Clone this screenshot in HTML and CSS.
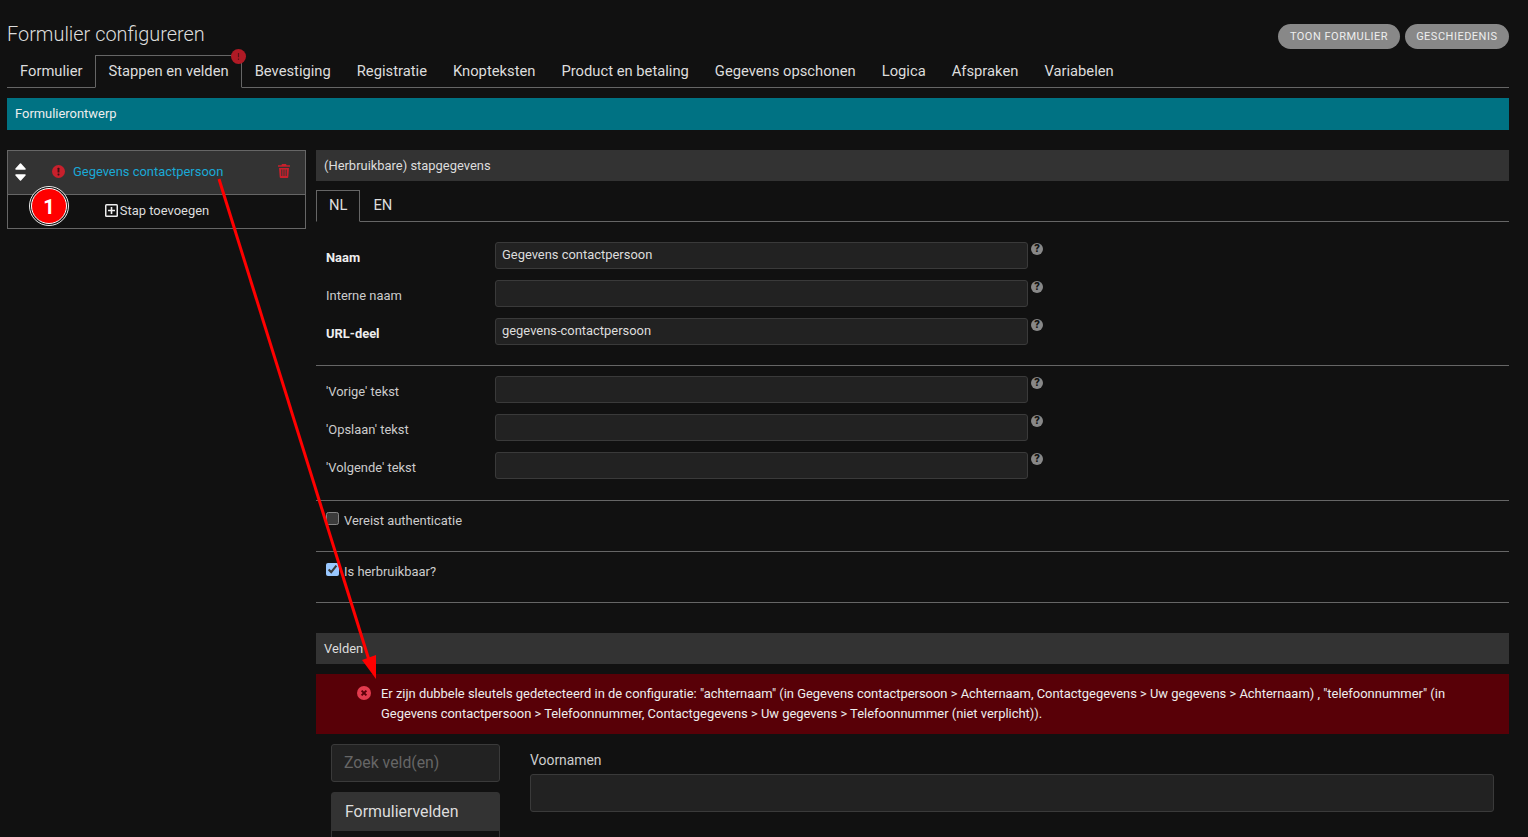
FILE: index.html
```html
<!DOCTYPE html>
<html lang="nl">
<head>
<meta charset="utf-8">
<title>Formulier configureren</title>
<link rel="stylesheet" href="styles.css">
</head>
<body>
<div class="page">
  <header class="head">
    <h1 class="title">Formulier configureren</h1>
    <div class="head-btns">
      <button class="pill">TOON FORMULIER</button>
      <button class="pill">GESCHIEDENIS</button>
    </div>
  </header>
  <nav class="tabs">
    <a class="tab">Formulier</a>
    <a class="tab active">Stappen en velden
      <span class="tab-badge"><svg viewBox="0 0 15 15" width="15" height="15"><circle cx="7.500" cy="7.500" r="7.500" fill="#b01a25"/><rect x="6.900" y="4" width="1.200" height="4.200" fill="#5a1016"/><rect x="6.900" y="9.500" width="1.200" height="1.400" fill="#5a1016"/></svg></span>
    </a>
    <a class="tab">Bevestiging</a>
    <a class="tab">Registratie</a>
    <a class="tab">Knopteksten</a>
    <a class="tab">Product en betaling</a>
    <a class="tab">Gegevens opschonen</a>
    <a class="tab">Logica</a>
    <a class="tab">Afspraken</a>
    <a class="tab">Variabelen</a>
  </nav>
  <div class="teal">Formulierontwerp</div>
  <div class="columns">
    <aside class="steps">
      <div class="step">
        <div class="sort">
          <svg viewBox="0 0 11 7" width="11" height="7"><path d="M5.500 1 10 6H1Z" fill="#fff" stroke="#fff" stroke-width="1.500" stroke-linejoin="round"/></svg>
          <svg viewBox="0 0 11 7" width="11" height="7"><path d="M5.500 6 10 1H1Z" fill="#fff" stroke="#fff" stroke-width="1.500" stroke-linejoin="round"/></svg>
        </div>
        <svg class="step-err" viewBox="0 0 14 14" width="13" height="13"><circle cx="7" cy="7" r="7" fill="#c8202c"/><rect x="6" y="3" width="2" height="5.200" rx=".6" fill="#3a1014"/><rect x="6" y="9.200" width="2" height="2" rx=".6" fill="#3a1014"/></svg>
        <span class="step-name">Gegevens contactpersoon</span>
        <svg class="trash" viewBox="0 0 12 14" width="12" height="14"><path d="M4 0h4l.6 1.200H12v1.600H0V1.200h3.400ZM1 4h10l-.7 9a1 1 0 0 1-1 1H2.700a1 1 0 0 1-1-1Z" fill="#c8202c"/><path d="M3.800 5.500v6.500M6 5.500v6.500M8.200 5.500v6.500" stroke="#333" stroke-width="1"/></svg>
      </div>
      <div class="add-step">
        <svg viewBox="0 0 13 13" width="13" height="13"><rect width="13" height="13" rx="1.500" fill="#eee"/><rect x="1.500" y="1.500" width="10" height="10" fill="#111"/><path d="M6.500 3v7M3 6.500h7" stroke="#eee" stroke-width="1.600"/></svg>
        <span>Stap toevoegen</span>
      </div>
    </aside>
    <main class="content">
      <div class="bar">(Herbruikbare) stapgegevens</div>
      <div class="lang-tabs">
        <a class="lang active">NL</a>
        <a class="lang">EN</a>
      </div>
      <section class="form-group first">
        <div class="row"><label class="lbl strong">Naam</label><input class="field" value="Gegevens contactpersoon"><span class="help">?</span></div>
        <div class="row"><label class="lbl">Interne naam</label><input class="field"><span class="help">?</span></div>
        <div class="row"><label class="lbl strong">URL-deel</label><input class="field" value="gegevens-contactpersoon"><span class="help">?</span></div>
      </section>
      <section class="form-group second">
        <div class="row"><label class="lbl">'Vorige' tekst</label><input class="field"><span class="help">?</span></div>
        <div class="row"><label class="lbl">'Opslaan' tekst</label><input class="field"><span class="help">?</span></div>
        <div class="row"><label class="lbl">'Volgende' tekst</label><input class="field"><span class="help">?</span></div>
      </section>
      <div class="check-row"><input type="checkbox" class="check"><span>Vereist authenticatie</span></div>
      <div class="check-row"><input type="checkbox" class="check" checked><span>Is herbruikbaar?</span></div>
      <div class="bar velden">Velden</div>
      <div class="alert">
        <svg class="alert-icon" viewBox="0 0 14 14" width="14" height="14"><circle cx="7" cy="7" r="7" fill="#e23b4e"/><path d="M4.600 4.600l4.800 4.800M9.400 4.600l-4.800 4.800" stroke="#5a0008" stroke-width="2"/></svg>
        <p>Er zijn dubbele sleutels gedetecteerd in de configuratie: "achternaam" (in Gegevens contactpersoon &gt; Achternaam, Contactgegevens &gt; Uw gegevens &gt; Achternaam) , "telefoonnummer" (in Gegevens contactpersoon &gt; Telefoonnummer, Contactgegevens &gt; Uw gegevens &gt; Telefoonnummer (niet verplicht)).</p>
      </div>
      <div class="builder">
        <div class="palette">
          <input class="search" placeholder="Zoek veld(en)">
          <div class="palette-card"><div class="palette-head">Formuliervelden</div></div>
        </div>
        <div class="canvas">
          <label class="canvas-lbl">Voornamen</label>
          <input class="canvas-input">
        </div>
      </div>
    </main>
  </div>
  <div class="marker"><span>1</span></div>
  <svg class="arrow" viewBox="0 0 1528 837" width="1528" height="837">
    <path d="M219 179 369 660" stroke="#f00" stroke-width="3" fill="none"/>
    <path d="M362 660 376 655 376 679Z" fill="#f00"/>
  </svg>
</div>
</body>
</html>
```
FILE: styles.css
```css
* { box-sizing: border-box; }
html, body { margin: 0; height: 837px; overflow: hidden; background: #111; }
body { font-family: Roboto, "Liberation Sans", sans-serif; font-size: 12.930px; color: #ddd; }
.page { position: relative; width: 1528px; height: 837px; padding: 0 19px 0 7px; overflow: hidden; }

.head { display: flex; justify-content: space-between; align-items: flex-start; height: 55px; padding-top: 22px; }
.title { margin: 0; font-size: 19.900px; line-height: 26px; font-weight: 300; color: #ddd; }
.head-btns { display: flex; gap: 5px; margin-top: 2px; }
.pill { height: 25px; padding: 0 11.500px; border: 0; border-radius: 13px; background: #888; color: #eee; font: 400 11px Roboto, sans-serif; letter-spacing: .5px; }

.tabs { display: flex; height: 33px; border-bottom: 1px solid #666; }
.tab { position: relative; height: 33px; padding: 6px 12px 0; font-size: 14.755px; line-height: 18px; color: #ddd; border: 1px solid transparent; border-bottom: 0; }
.tab.active { border-color: #666; border-bottom: 1px solid #111; }
.tab-badge { position: absolute; right: -5px; top: -7px; width: 15px; height: 15px; display: flex; }

.teal { height: 32px; margin-top: 10px; padding: 0 8px; background: #007283; color: #eee; line-height: 31px; }

.columns { display: flex; gap: 10px; margin-top: 20px; align-items: flex-start; }
.steps { width: 299px; height: 79px; border: 1px solid #666; flex: none; }
.step { position: relative; display: flex; align-items: center; height: 44px; background: #333; border-bottom: 1px solid #666; padding: 0 0 2px 7px; }
.sort { display: flex; flex-direction: column; gap: 4px; width: 11px; }
.step-err { margin-left: 26px; }
.step-name { margin-left: 8px; color: #1aa9d6; }
.trash { position: absolute; right: 15px; top: 13px; }
.add-step { display: flex; align-items: center; justify-content: center; gap: 2px; height: 33px; color: #ddd; padding: 0 0 2px 1px; }

.content { flex: 1; min-width: 0; }
.bar { height: 31px; padding: 0 8px; background: #333; line-height: 31px; color: #ddd; }
.lang-tabs { display: flex; height: 32px; margin-top: 9px; border-bottom: 1px solid #666; }
.lang { height: 32px; padding: 5px 12px 0; font-size: 14.755px; line-height: 18px; color: #ddd; border: 1px solid transparent; border-bottom: 0; }
.lang.active { border-color: #666; border-bottom: 1px solid #111; }

.form-group { display: flex; flex-direction: column; gap: 11px; border-bottom: 1px solid #666; }
.form-group.first { margin-top: 20px; padding-bottom: 20px; }
.form-group.second { margin-top: 10px; padding-bottom: 21px; }
.row { display: flex; align-items: flex-start; height: 27px; padding-left: 10px; }
.lbl { width: 169px; padding-top: 8px; line-height: 15px; color: #ccc; }
.lbl.strong { font-weight: 700; color: #eee; }
.field { width: 533px; height: 27px; padding: 0 6px 2px; background: #222; border: 1px solid #3a3a3a; border-radius: 3px; color: #ddd; font: 12.930px Roboto, sans-serif; outline: 0; }
.help { width: 12px; height: 12px; margin: 1px 0 0 3px; border-radius: 50%; background: #888; color: #111; font-size: 11px; font-weight: 900; line-height: 12px; text-align: center; }

.check-row { display: flex; align-items: flex-start; height: 51px; padding: 11px 0 0 10px; border-bottom: 1px solid #666; line-height: 17px; color: #ccc; }
.check { width: 13px; height: 13px; margin: 0 5px 0 0; color-scheme: dark; accent-color: #99c8ff; }

.velden { margin-top: 30px; }
.alert { display: flex; align-items: flex-start; height: 60px; margin-top: 10px; padding: 10px 45px 0 41px; background: #580007; color: #eee; line-height: 20px; }
.alert-icon { flex: none; margin: 2px 10px 0 0; }
.alert p { margin: 0; }

.builder { display: flex; gap: 30px; margin-top: 10px; padding-left: 15px; }
.palette { width: 169px; flex: none; }
.search { display: block; width: 100%; height: 38px; padding: 0 12px 2px; background: #222; border: 1px solid #3a3a3a; border-radius: 3px; font: 15.800px Roboto, sans-serif; color: #ddd; outline: 0; }
.search::placeholder { color: #666; opacity: 1; }
.palette-card { margin-top: 10px; height: 80px; border: 1px solid #333; border-radius: 3px; }
.palette-head { height: 38px; padding: 0 13px; background: #333; font-size: 15.900px; line-height: 38px; color: #ddd; }
.canvas { flex: 1; padding-right: 15px; }
.canvas-lbl { display: block; height: 22px; padding-top: 8px; font-size: 13.900px; line-height: 16px; color: #ccc; margin-bottom: 8px; }
.canvas-input { display: block; width: 100%; height: 38px; background: #222; border: 1px solid #3a3a3a; border-radius: 3px; outline: 0; }

.marker { position: absolute; left: 29px; top: 186px; width: 40px; height: 40px; border-radius: 50%; border: 1px solid #eee; padding: 1px; background: #111; }
.marker span { display: block; width: 100%; height: 100%; border: 1px solid #fff; border-radius: 50%; background: #f00; color: #fff; font-size: 20px; font-weight: 700; line-height: 36px; text-align: center; }
.arrow { position: absolute; left: 0; top: 0; pointer-events: none; }
```
